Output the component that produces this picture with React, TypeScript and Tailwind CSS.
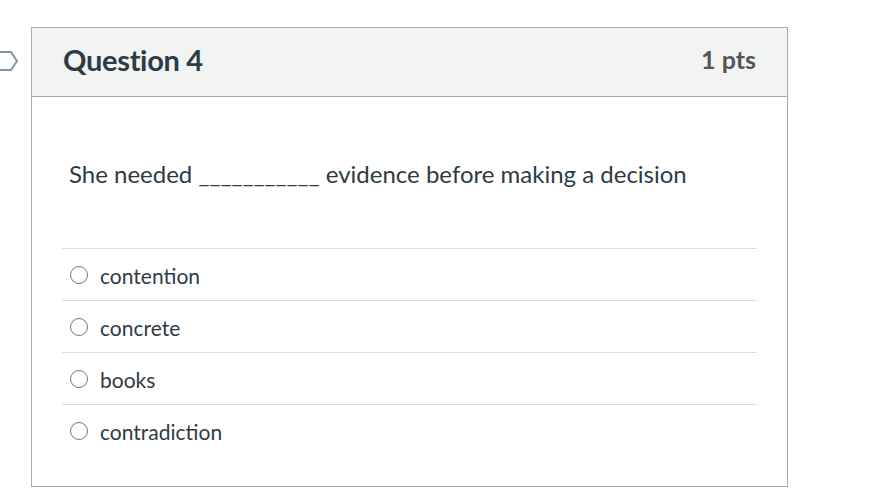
import React from "react";

const options = ["contention", "concrete", "books", "contradiction"];

export default function App() {
  return (
    <div
      className="relative w-[870px] h-[501px] bg-white pt-[27px] pl-[31px]"
      style={{ fontFamily: "Lato, 'Noto Sans', sans-serif" }}
    >
      <svg
        className="absolute left-0 top-[50px]"
        width="20"
        height="22"
        viewBox="0 0 20 22"
      >
        <path
          d="M-4 2 H11 L17 11 L11 20 H-4"
          fill="none"
          stroke="#7b96ab"
          strokeWidth="2"
          strokeLinejoin="miter"
        />
      </svg>
      <div className="w-[757px] h-[460px] border border-[#aaaaaa] bg-white">
        <div className="h-[69px] bg-[#f2f3f3] border-b border-[#aaaaaa] flex items-center justify-between px-[31px] pb-[4px]">
          <span className="text-[29px] font-bold text-[#2d3b45] tracking-[-0.3px]">
            Question 4
          </span>
          <span className="text-[25px] font-bold text-[#555555]">1 pts</span>
        </div>
        <div className="px-[30px]">
          <p className="pt-[63px] pl-[7px] text-[24px] leading-[28px] text-[#2d3b45]">
            She needed ___________ evidence before making a decision
          </p>
          <div className="mt-[60px]">
            {options.map((o) => (
              <div
                key={o}
                className="h-[52px] flex items-center border-t border-[#dddddd]"
              >
                <span className="ml-[8px] w-[18px] h-[18px] rounded-full border-[1.5px] border-[#777777] bg-white" />
                <span className="ml-[12px] text-[21px] text-[#2d3b45] pt-[2px]">
                  {o}
                </span>
              </div>
            ))}
          </div>
        </div>
      </div>
    </div>
  );
}
